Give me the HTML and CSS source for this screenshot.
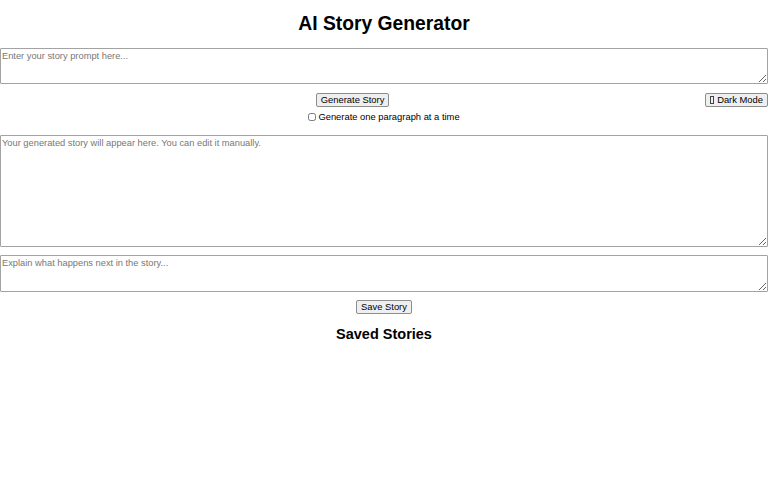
FILE: index.html
```html
<!DOCTYPE html>
<html lang="en">
<head>
<meta charset="utf-8">
<title>AI Story Generator</title>
<link rel="stylesheet" href="styles.css">
</head>
<body>
<div class="page">
  <h1 class="title">AI Story Generator</h1>
  <textarea class="field prompt" placeholder="Enter your story prompt here..."></textarea>
  <div class="actions">
    <div class="actions-center">
      <button class="btn" type="button">Generate Story</button>
    </div>
    <button class="btn btn-mode" type="button"><span class="tofu"></span>Dark Mode</button>
  </div>
  <label class="option"><input class="check" type="checkbox">Generate one paragraph at a time</label>
  <textarea class="field story" placeholder="Your generated story will appear here. You can edit it manually."></textarea>
  <textarea class="field next" placeholder="Explain what happens next in the story..."></textarea>
  <div class="save-row">
    <button class="btn" type="button">Save Story</button>
  </div>
  <h2 class="subtitle">Saved Stories</h2>
</div>
</body>
</html>
```

FILE: styles.css
```css
html, body {
  margin: 0;
  padding: 0;
  background: #ffffff;
}

.page {
  display: flex;
  flex-direction: column;
  font-family: "Liberation Sans", Arial, sans-serif;
  color: #000;
}

.title {
  margin: 13px 0 13px;
  font-size: 19.3px;
  line-height: 22px;
  font-weight: bold;
  text-align: center;
}

.field {
  display: block;
  box-sizing: border-box;
  width: 100%;
  margin: 0;
  padding: 2px 1px;
  border: 1px solid #a3a3a3;
  border-radius: 1px;
  font-family: "Liberation Sans", Arial, sans-serif;
  font-size: 9.3px;
  line-height: 11px;
  color: #000;
  background: #fff;
  resize: vertical;
  outline: none;
}

.field::placeholder {
  color: #777777;
}

.prompt {
  height: 36px;
}

.actions {
  display: flex;
  align-items: center;
  margin-top: 9px;
  height: 14px;
}

.actions-center {
  flex: 1;
  display: flex;
  justify-content: center;
}

.btn {
  box-sizing: border-box;
  height: 14px;
  margin: 0;
  padding: 0 4px;
  font-family: "Liberation Sans", Arial, sans-serif;
  font-size: 9.4px;
  line-height: 12px;
  color: #000;
  background: #efefef;
  border: 1px solid #8d8d8d;
  border-radius: 2px;
  display: inline-flex;
  align-items: center;
}

.btn-mode {
  gap: 3px;
}

.tofu {
  display: inline-block;
  width: 2px;
  height: 6px;
  border: 1px solid #444;
}

.option {
  display: flex;
  justify-content: center;
  align-items: center;
  margin-top: 4px;
  height: 12px;
  font-size: 9.4px;
  line-height: 12px;
}

.check {
  width: 8px;
  height: 8px;
  margin: 0 2px 0 0;
}

.story {
  margin-top: 12px;
  height: 112px;
}

.next {
  margin-top: 8px;
  height: 37px;
}

.save-row {
  display: flex;
  justify-content: center;
  margin-top: 8px;
}

.subtitle {
  margin: 12px 0 0;
  font-size: 14.5px;
  line-height: 17px;
  font-weight: bold;
  text-align: center;
}
```
